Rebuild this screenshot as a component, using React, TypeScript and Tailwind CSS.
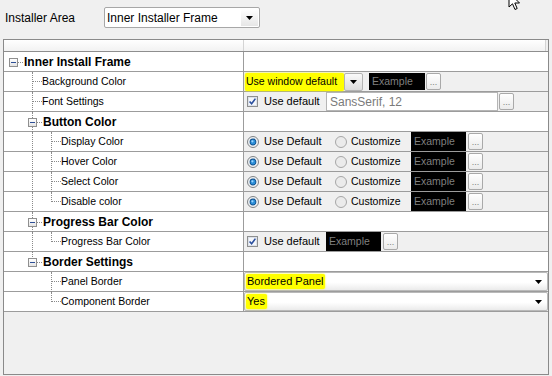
import type { ReactNode } from 'react'

type Kind = 'root' | 'cat' | 'leaf1' | 'leaf2'
type Line = 'full' | 'top'
type Editor = 'bg' | 'font' | 'radio' | 'check' | 'panel' | 'component'

type Row = {
  label: string
  kind: Kind
  v1?: Line
  v2?: Line
  editor?: Editor
}

const rows: Row[] = [
  { label: 'Inner Install Frame', kind: 'root' },
  { label: 'Background Color', kind: 'leaf1', v1: 'full', editor: 'bg' },
  { label: 'Font Settings', kind: 'leaf1', v1: 'full', editor: 'font' },
  { label: 'Button Color', kind: 'cat', v1: 'full' },
  { label: 'Display Color', kind: 'leaf2', v1: 'full', v2: 'full', editor: 'radio' },
  { label: 'Hover Color', kind: 'leaf2', v1: 'full', v2: 'full', editor: 'radio' },
  { label: 'Select Color', kind: 'leaf2', v1: 'full', v2: 'full', editor: 'radio' },
  { label: 'Disable color', kind: 'leaf2', v1: 'full', v2: 'top', editor: 'radio' },
  { label: 'Progress Bar Color', kind: 'cat', v1: 'full' },
  { label: 'Progress Bar Color', kind: 'leaf2', v1: 'full', v2: 'top', editor: 'check' },
  { label: 'Border Settings', kind: 'cat', v1: 'top' },
  { label: 'Panel Border', kind: 'leaf2', v2: 'full', editor: 'panel' },
  { label: 'Component Border', kind: 'leaf2', v2: 'top', editor: 'component' },
]

function Arrow() {
  return (
    <svg width="7" height="4" viewBox="0 0 7 4">
      <polygon points="0,0 7,0 3.5,4" fill="#000" />
    </svg>
  )
}

function Checkbox() {
  return (
    <svg width="11" height="11" viewBox="0 0 11 11" className="shrink-0">
      <rect x="0.5" y="0.5" width="10" height="10" fill="#f5f7fb" stroke="#8e8f8f" />
      <rect x="1.5" y="1.5" width="8" height="8" fill="none" stroke="#dde2ea" />
      <path d="M2.6 5.4 L4.6 7.8 L8.4 2.6" fill="none" stroke="#2a4f9e" strokeWidth="1.6" />
    </svg>
  )
}

function Radio({ on }: { on?: boolean }) {
  return (
    <svg width="12" height="12" viewBox="0 0 12 12" className="shrink-0">
      <circle cx="6" cy="6" r="5.5" fill={on ? '#eef0f2' : '#ebebeb'} stroke={on ? '#7e8286' : '#a6a6a6'} />
      {on && (
        <>
          <circle cx="6" cy="6" r="3.4" fill="#0f4f8c" />
          <circle cx="6" cy="6" r="2.5" fill="#2b8ed8" />
          <circle cx="5.4" cy="5.3" r="1.1" fill="#9fd6ff" />
        </>
      )}
    </svg>
  )
}

function Dots() {
  return (
    <div className="w-[15px] h-[17px] shrink-0 border border-[#a9a9a9] rounded-[2px] bg-[linear-gradient(#ffffff,#ebebeb)] flex items-end justify-center text-[9px] leading-[9px] text-[#808080] pb-[2px]">
      ...
    </div>
  )
}

function Swatch({ className }: { className: string }) {
  return (
    <div className={'bg-black text-[#7f7f7f] text-[10.5px] flex items-center pl-[3px] shrink-0 ' + className}>
      Example
    </div>
  )
}

function Yellow({ children }: { children: ReactNode }) {
  return (
    <span className="bg-[#ffff00] h-[15px] leading-[15px] text-[11px] text-black pl-[1px] pr-[2px] rounded-[2px] shadow-[0_0_2px_#ffff00] whitespace-nowrap">
      {children}
    </span>
  )
}

function FullCombo({ value }: { value: string }) {
  return (
    <div className="h-[19px] w-full border border-[#b9b9b9] rounded-[2px] bg-[linear-gradient(#ffffff_55%,#ebebeb)] flex items-center pl-[1px]">
      <Yellow>{value}</Yellow>
      <div className="ml-auto w-[18px] h-full flex items-center justify-center">
        <Arrow />
      </div>
    </div>
  )
}

function EditorCell({ editor }: { editor?: Editor }) {
  if (!editor) return <div className="flex-1 h-full bg-white" />

  if (editor === 'bg') {
    return (
      <div className="flex-1 h-full bg-[#f0f0f0] flex items-center pl-[1px]">
        <div className="w-[118px] h-[18px] flex items-stretch">
          <div className="flex-1 flex items-center bg-[#ffff00] rounded-[2px] shadow-[0_0_2px_#ffff00] text-[10.5px] pl-[1px]">
            Use window default
          </div>
          <div className="w-[19px] border border-[#b3b3b3] rounded-[2px] bg-[linear-gradient(#fafafa,#dcdcdc)] flex items-center justify-center">
            <Arrow />
          </div>
        </div>
        <Swatch className="ml-[6px] w-[56px] h-[17px]" />
        <div className="ml-[1px]">
          <Dots />
        </div>
      </div>
    )
  }

  if (editor === 'font') {
    return (
      <div className="flex-1 h-full bg-[#f0f0f0] flex items-center pl-[3px]">
        <div className="w-[79px] flex items-center gap-[6px] text-[11px]">
          <Checkbox />
          <span>Use default</span>
        </div>
        <div className="w-[172px] h-[19px] bg-white border border-[#b5b5b5] flex items-center pl-[3px] text-[12px] text-[#7a7a7a]">
          SansSerif, 12
        </div>
        <div className="ml-[1px]">
          <Dots />
        </div>
      </div>
    )
  }

  if (editor === 'radio') {
    return (
      <div className="flex-1 h-full bg-[#f0f0f0] flex items-center pl-[3px] text-[11px]">
        <div className="w-[88px] flex items-center gap-[5px]">
          <Radio on />
          <span>Use Default</span>
        </div>
        <div className="w-[76px] flex items-center gap-[4px]">
          <Radio />
          <span className="text-[10.5px]">Customize</span>
        </div>
        <Swatch className="w-[55px] h-[19px]" />
        <div className="ml-[2px]">
          <Dots />
        </div>
      </div>
    )
  }

  if (editor === 'check') {
    return (
      <div className="flex-1 h-full bg-[#f0f0f0] flex items-center pl-[3px]">
        <div className="w-[79px] flex items-center gap-[6px] text-[11px]">
          <Checkbox />
          <span>Use default</span>
        </div>
        <Swatch className="w-[55px] h-[19px]" />
        <div className="ml-[2px]">
          <Dots />
        </div>
      </div>
    )
  }

  return (
    <div className="flex-1 h-full bg-[#f0f0f0]">
      <FullCombo value={editor === 'panel' ? 'Bordered Panel' : 'Yes'} />
    </div>
  )
}

function ExpandBox({ left }: { left: string }) {
  return (
    <div className={'absolute top-[6px] w-[9px] h-[9px] border border-[#8f8f8f] bg-[linear-gradient(#ffffff,#e4e4e4)] flex items-center justify-center ' + left}>
      <div className="w-[5px] h-px bg-[#2d4f96]" />
    </div>
  )
}

function TreeCell({ row }: { row: Row }) {
  const dot = 'absolute border-dotted border-[#8a8a8a]'
  return (
    <div className="relative w-[240px] h-full shrink-0 bg-white border-r border-[#9c9c9c] flex items-center">
      {row.v1 === 'full' && <div className={dot + ' left-[28px] top-0 -bottom-px border-l'} />}
      {row.v1 === 'top' && <div className={dot + ' left-[28px] top-0 h-[7px] border-l'} />}
      {row.v2 === 'full' && <div className={dot + ' left-[47px] top-0 -bottom-px border-l'} />}
      {row.v2 === 'top' && <div className={dot + ' left-[47px] top-0 h-[10px] border-l'} />}

      {row.kind === 'root' && (
        <>
          <ExpandBox left="left-[5px]" />
          <div className={dot + ' left-[14px] top-[10px] w-[5px] border-t'} />
          <span className="pl-[20px] text-[12px] font-bold">{row.label}</span>
        </>
      )}
      {row.kind === 'cat' && (
        <>
          <ExpandBox left="left-[24px]" />
          <div className={dot + ' left-[33px] top-[10px] w-[5px] border-t'} />
          <span className="pl-[39px] text-[12px] font-bold">{row.label}</span>
        </>
      )}
      {row.kind === 'leaf1' && (
        <>
          <div className={dot + ' left-[29px] top-[9px] w-[9px] border-t'} />
          <span className="pl-[38px] text-[10.5px]">{row.label}</span>
        </>
      )}
      {row.kind === 'leaf2' && (
        <>
          <div className={dot + ' left-[48px] top-[9px] w-[9px] border-t'} />
          <span className="pl-[57px] text-[10.5px]">{row.label}</span>
        </>
      )}
    </div>
  )
}

function Cursor() {
  return (
    <svg className="absolute left-[508px] -top-[8px]" width="14" height="20" viewBox="0 0 14 20">
      <polygon
        points="1,0.5 1,15 4.5,11.8 7,17.5 9.2,16.5 6.8,11 11.5,11"
        fill="#fff"
        stroke="#000"
        strokeWidth="1"
        strokeLinejoin="round"
      />
    </svg>
  )
}

export default function App() {
  return (
    <div className="relative w-[552px] h-[376px] overflow-hidden bg-[#f0f0f0] text-black font-['Liberation_Sans',Arial,sans-serif]">
      <Cursor />

      <div className="flex items-center h-[21px] mt-[7px]">
        <span className="ml-[5px] w-[99px] text-[12px]">Installer Area</span>
        <div className="w-[156px] h-[21px] border border-[#a7a7a7] rounded-[2px] bg-white flex items-center">
          <span className="pl-[2px] text-[12px]">Inner Installer Frame</span>
          <div className="ml-auto w-[17px] h-[17px] mr-[1px] bg-[linear-gradient(#ffffff,#e6e6e6)] flex items-center justify-center">
            <Arrow />
          </div>
        </div>
      </div>

      <div className="ml-[3px] mt-[11px] w-[546px] h-[336px] border border-[#8a8a8a] flex flex-col">
        <div className="h-[12px] shrink-0 flex border-b border-[#8e8e8e]">
          <div className="w-[240px] bg-[linear-gradient(#ffffff,#f2f2f2)] border-r border-[#d4d4d4]" />
          <div className="flex-1 bg-[linear-gradient(#ffffff,#f2f2f2)] border-r border-[#d4d4d4]" />
          <div className="w-[2px] bg-[#f0f0f0]" />
        </div>

        {rows.map((row, i) => (
          <div key={i} className="h-[20px] shrink-0 flex border-b border-[#9c9c9c]">
            <TreeCell row={row} />
            <EditorCell editor={row.editor} />
          </div>
        ))}
      </div>
    </div>
  )
}
